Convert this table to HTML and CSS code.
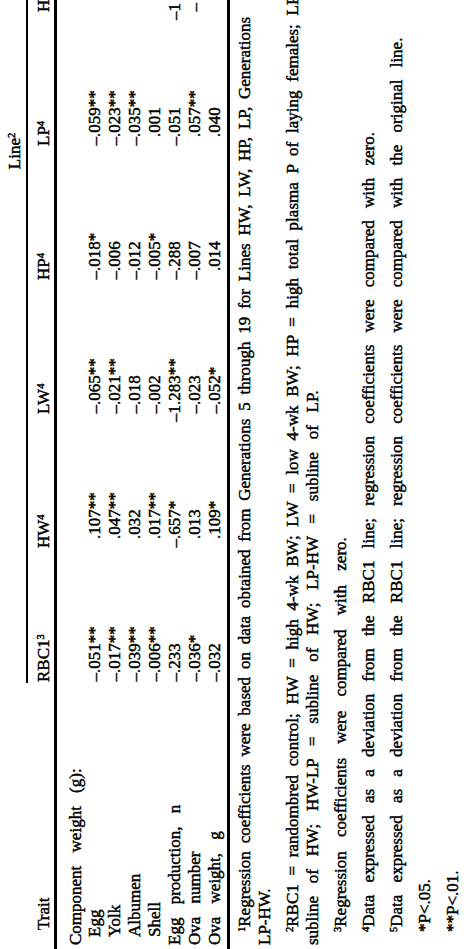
FILE: index.html
```html
<!DOCTYPE html>
<html lang="en">
<head>
<meta charset="utf-8">
<title>Regression coefficients table</title>
<link rel="stylesheet" href="styles.css">
</head>
<body>
<div class="page">
  <div class="spanner">Line<sup>2</sup></div>
  <div class="row head">
    <div class="trait">Trait</div>
    <div>RBC1<sup>3</sup></div>
    <div>HW<sup>4</sup></div>
    <div>LW<sup>4</sup></div>
    <div>HP<sup>4</sup></div>
    <div>LP<sup>4</sup></div>
    <div class="hwlp">HW-LP<sup>4</sup></div>
  </div>
  <div class="tbody">
    <div class="row group"><div class="label">Component weight (g):</div></div>
    <div class="row">
      <div class="label sub">Egg</div>
      <div class="n"><span class="i">&ndash;</span>.051**</div>
      <div class="n"><span class="i"></span>.107**</div>
      <div class="n"><span class="i">&ndash;</span>.065**</div>
      <div class="n"><span class="i">&ndash;</span>.018*</div>
      <div class="n"><span class="i">&ndash;</span>.059**</div>
    </div>
    <div class="row">
      <div class="label sub">Yolk</div>
      <div class="n"><span class="i">&ndash;</span>.017**</div>
      <div class="n"><span class="i"></span>.047**</div>
      <div class="n"><span class="i">&ndash;</span>.021**</div>
      <div class="n"><span class="i">&ndash;</span>.006</div>
      <div class="n"><span class="i">&ndash;</span>.023**</div>
    </div>
    <div class="row">
      <div class="label sub">Albumen</div>
      <div class="n"><span class="i">&ndash;</span>.039**</div>
      <div class="n"><span class="i"></span>.032</div>
      <div class="n"><span class="i">&ndash;</span>.018</div>
      <div class="n"><span class="i">&ndash;</span>.012</div>
      <div class="n"><span class="i">&ndash;</span>.035**</div>
    </div>
    <div class="row">
      <div class="label sub">Shell</div>
      <div class="n"><span class="i">&ndash;</span>.006**</div>
      <div class="n"><span class="i"></span>.017**</div>
      <div class="n"><span class="i">&ndash;</span>.002</div>
      <div class="n"><span class="i">&ndash;</span>.005*</div>
      <div class="n"><span class="i"></span>.001</div>
    </div>
    <div class="row">
      <div class="label">Egg production, n</div>
      <div class="n"><span class="i">&ndash;</span>.233</div>
      <div class="n"><span class="i">&ndash;</span>.657*</div>
      <div class="n"><span class="i">&ndash;1</span>.283**</div>
      <div class="n"><span class="i">&ndash;</span>.288</div>
      <div class="n"><span class="i">&ndash;</span>.051</div>
      <div class="n"><span class="i">&ndash;1</span></div>
    </div>
    <div class="row">
      <div class="label">Ova number</div>
      <div class="n"><span class="i">&ndash;</span>.036*</div>
      <div class="n"><span class="i"></span>.013</div>
      <div class="n"><span class="i">&ndash;</span>.023</div>
      <div class="n"><span class="i">&ndash;</span>.007</div>
      <div class="n"><span class="i"></span>.057**</div>
      <div class="n"><span class="i">&ndash;</span></div>
    </div>
    <div class="row">
      <div class="label">Ova weight, g</div>
      <div class="n"><span class="i">&ndash;</span>.032</div>
      <div class="n"><span class="i"></span>.109*</div>
      <div class="n"><span class="i">&ndash;</span>.052*</div>
      <div class="n"><span class="i"></span>.014</div>
      <div class="n"><span class="i"></span>.040</div>
    </div>
  </div>
  <div class="notes">
    <p class="fn1"><sup>1</sup>Regression coefficients were based on data obtained from Generations 5 through 19 for Lines HW, LW, HP, LP, Generations<br>LP-HW.</p>
    <p class="fn2"><sup>2</sup>RBC1 = randombred control; HW = high 4-wk BW; LW = low 4-wk BW; HP = high total plasma P of laying females; LP = low total plasma P of laying females;<br><span class="loose">subline of HW; HW-LP = subline of HW; LP-HW = subline of LP.</span></p>
    <p class="fn3"><sup>3</sup>Regression coefficients were compared with zero.</p>
    <p class="fn4"><sup>4</sup>Data expressed as a deviation from the RBC1 line; regression coefficients were compared with zero.</p>
    <p class="fn4"><sup>5</sup>Data expressed as a deviation from the RBC1 line; regression coefficients were compared with the original line.</p>
    <p>*P&lt;.05.</p>
    <p>**P&lt;.01.</p>
  </div>
</div>
</body>
</html>
```

FILE: styles.css
```css
html, body {
  margin: 0;
  padding: 0;
}

body {
  width: 474px;
  height: 949px;
  overflow: hidden;
  background: #fff;
}

/* The printed page is set sideways: lay it out upright, then turn it. */
.page {
  width: 949px;
  height: 474px;
  overflow: hidden;
  transform-origin: 0 0;
  transform: translateY(949px) rotate(-90deg);
  font-family: "Liberation Serif", "Times New Roman", serif;
  font-size: 17px;
  line-height: 20px;
  color: #000;
  word-spacing: 3px;
  -webkit-text-stroke: 0.45px #000;
}

sup {
  font-size: 0.62em;
  line-height: 0;
  vertical-align: 0.5em;
}

.spanner {
  margin: 5px 0 0 266px;
  width: 1064px;
  padding-bottom: 1px;
  border-bottom: 2px solid #000;
  text-align: center;
}

.row {
  display: grid;
  grid-template-columns: 263px repeat(5, 134px) 1fr;
  padding-left: 4px;
  white-space: nowrap;
}

.head {
  padding-top: 6px;
  border-bottom: 3px solid #000;
}

.head .trait {
  padding-left: 15px;
}

.tbody {
  padding: 9px 0 2px;
  border-bottom: 3px solid #000;
}

.group {
  line-height: 19px;
}

.label {
  word-spacing: 9px;
}

.sub {
  padding-left: 8px;
}

.n .i {
  display: inline-flex;
  justify-content: flex-end;
  width: 9px;
}

.notes {
  padding-top: 5px;
}

.notes p {
  margin: 0 0 8px;
  padding-left: 4px;
  text-indent: 13px;
  white-space: nowrap;
}

.notes .fn1 {
  word-spacing: 3.6px;
}

.notes .fn2 {
  word-spacing: 4.5px;
}

.notes .fn2 .loose {
  word-spacing: 8.5px;
}

.notes .fn3 {
  word-spacing: 10px;
}

.notes .fn4 {
  word-spacing: 8px;
}
```
